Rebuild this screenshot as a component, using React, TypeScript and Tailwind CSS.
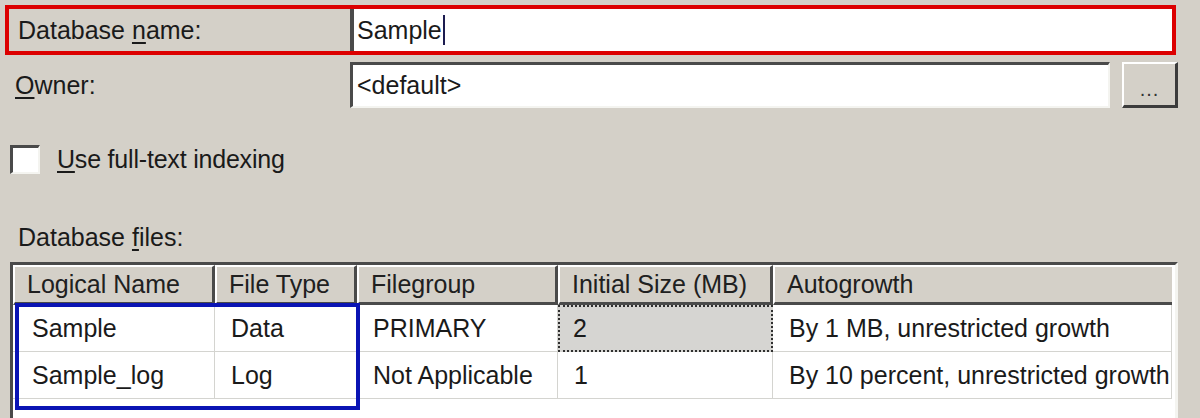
import React from 'react'

const columns = ['Logical Name', 'File Type', 'Filegroup', 'Initial Size (MB)', 'Autogrowth']

const files = [
  ['Sample', 'Data', 'PRIMARY', '2', 'By 1 MB, unrestricted growth'],
  ['Sample_log', 'Log', 'Not Applicable', '1', 'By 10 percent, unrestricted growth'],
]

export default function App() {
  return (
    <div className="h-[418px] w-[1200px] overflow-hidden bg-[#d4d0c8] font-['Liberation_Sans',Arial,sans-serif] text-[25px] leading-none text-[#1a1a1a]">
      <div className="flex flex-col pt-[5px]">
        {/* Database name row, highlighted in red */}
        <div className="ml-[5px] flex h-[50px] w-[1171px] border-4 border-[#dc0000]">
          <label className="flex w-[341px] items-center pl-[9px]">
            Database&nbsp;<u className="underline-offset-[3px]">n</u>ame:
          </label>
          <div className="flex flex-1 items-center border-l-4 border-[#4a4a4a] bg-white pl-[3px]">
            Sample
            <span className="ml-[1px] inline-block h-[30px] w-[2px] bg-[#1c1c50]"></span>
          </div>
        </div>

        {/* Owner row */}
        <div className="mt-[7px] flex h-[46px]">
          <label className="flex w-[350px] items-center pl-[15px]">
            <u className="underline-offset-[3px]">O</u>wner:
          </label>
          <div className="flex w-[760px] items-center border-t-[3px] border-l-[3px] border-r-2 border-b-2 border-t-[#4a4a4a] border-l-[#4a4a4a] border-r-[#f4f4f0] border-b-[#f4f4f0] bg-white pl-[4px]">
            &lt;default&gt;
          </div>
          <button className="ml-[12px] flex w-[56px] items-end justify-center border-t-2 border-l-2 border-r-[3px] border-b-[3px] border-t-white border-l-white border-r-[#3c3c3c] border-b-[#3c3c3c] bg-[#d4d0c8] pb-[6px] text-[20px] tracking-[1px] text-[#333]">
            ...
          </button>
        </div>

        {/* Full-text indexing */}
        <div className="mt-[37px] flex h-[29px] items-center pl-[10px]">
          <span className="h-[29px] w-[30px] border-t-[3px] border-l-[3px] border-r-2 border-b-2 border-t-[#4a4a4a] border-l-[#4a4a4a] border-r-[#f4f4f0] border-b-[#f4f4f0] bg-white"></span>
          <span className="ml-[17px] tracking-[-0.2px]">
            <u className="underline-offset-[3px]">U</u>se full-text indexing
          </span>
        </div>

        <div className="mt-[48px] pl-[18px] leading-[30px]">
          Database&nbsp;<u className="underline-offset-[3px]">f</u>iles:
        </div>

        {/* Database files grid */}
        <div className="relative ml-[10px] mt-[10px] h-[200px] w-[1168px] border-t-[3px] border-l-[3px] border-r-[3px] border-t-[#4a4a4a] border-l-[#4a4a4a] border-r-[#f4f4f0] bg-white">
          <div className="grid grid-cols-[202px_142px_201px_215px_399px]">
            {columns.map((col, i) => (
              <div
                key={col}
                className={
                  i < columns.length - 1
                    ? 'flex h-[40px] items-center border-t-2 border-l-2 border-r-[3px] border-b-[3px] border-t-white border-l-white border-r-[#4a4a4a] border-b-[#4a4a4a] bg-[#d4d0c8] pl-[12px] text-[#202020]'
                    : 'flex h-[40px] items-center border-t-2 border-l-2 border-b-[3px] border-t-white border-l-white border-b-[#4a4a4a] bg-[#d4d0c8] pl-[12px] text-[#202020]'
                }
              >
                {col}
              </div>
            ))}
            {files.map((row, r) =>
              row.map((cell, c) => (
                <div
                  key={`${r}-${c}`}
                  className={
                    r === 0 && c === 3
                      ? 'flex h-[47px] items-center border-2 border-dotted border-[#303030] bg-[#d6d5d2] pl-[13px]'
                      : c === 0
                        ? 'flex h-[47px] items-center border-r border-b border-[#d4d4d0] pl-[19px]'
                        : 'flex h-[47px] items-center border-r border-b border-[#d4d4d0] pl-[16px]'
                  }
                >
                  {cell}
                </div>
              ))
            )}
          </div>

          {/* Blue highlight over name and type columns */}
          <div className="pointer-events-none absolute left-[2px] top-[38px] h-[107px] w-[345px] border-4 border-[#0a14b4]"></div>
        </div>
      </div>
    </div>
  )
}
